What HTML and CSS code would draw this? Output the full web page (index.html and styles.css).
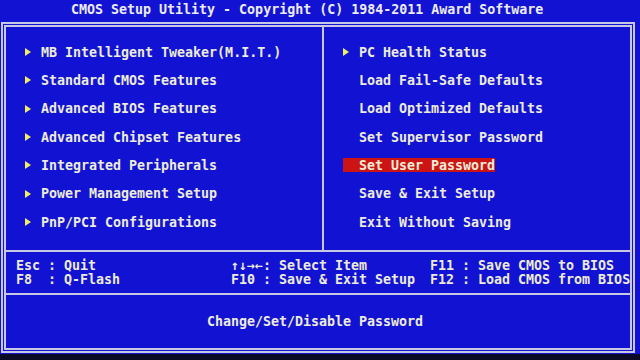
FILE: index.html
```html
<!DOCTYPE html>
<html>
<head>
<meta charset="utf-8">
<link rel="stylesheet" href="styles.css">
</head>
<body>
<div class="screen">
  <div class="title">CMOS Setup Utility - Copyright (C) 1984-2011 Award Software</div>
  <div class="frame">
    <div class="menus">
      <div class="col col-left">
        <div class="row"><span class="item"><span class="marker"><span class="tri"></span></span><span class="label">MB Intelligent Tweaker(M.I.T.)</span></span></div>
        <div class="row"><span class="item"><span class="marker"><span class="tri"></span></span><span class="label">Standard CMOS Features</span></span></div>
        <div class="row"><span class="item"><span class="marker"><span class="tri"></span></span><span class="label">Advanced BIOS Features</span></span></div>
        <div class="row"><span class="item"><span class="marker"><span class="tri"></span></span><span class="label">Advanced Chipset Features</span></span></div>
        <div class="row"><span class="item"><span class="marker"><span class="tri"></span></span><span class="label">Integrated Peripherals</span></span></div>
        <div class="row"><span class="item"><span class="marker"><span class="tri"></span></span><span class="label">Power Management Setup</span></span></div>
        <div class="row"><span class="item"><span class="marker"><span class="tri"></span></span><span class="label">PnP/PCI Configurations</span></span></div>
      </div>
      <div class="col col-right">
        <div class="row"><span class="item"><span class="marker"><span class="tri"></span></span><span class="label">PC Health Status</span></span></div>
        <div class="row"><span class="item"><span class="marker"></span><span class="label">Load Fail-Safe Defaults</span></span></div>
        <div class="row"><span class="item"><span class="marker"></span><span class="label">Load Optimized Defaults</span></span></div>
        <div class="row"><span class="item"><span class="marker"></span><span class="label">Set Supervisor Password</span></span></div>
        <div class="row"><span class="item selected"><span class="marker"></span><span class="label">Set User Password</span></span></div>
        <div class="row"><span class="item"><span class="marker"></span><span class="label">Save &amp; Exit Setup</span></span></div>
        <div class="row"><span class="item"><span class="marker"></span><span class="label">Exit Without Saving</span></span></div>
      </div>
    </div>
    <div class="keys">
      <span>Esc : Quit</span>
      <span>↑↓→←: Select Item</span>
      <span>F11 : Save CMOS to BIOS</span>
      <span>F8  : Q-Flash</span>
      <span>F10 : Save &amp; Exit Setup</span>
      <span>F12 : Load CMOS from BIOS</span>
    </div>
    <div class="help">Change/Set/Disable Password</div>
  </div>
  <div class="strip"></div>
</div>
</body>
</html>
```
FILE: styles.css
```css
html, body {
  margin: 0;
  padding: 0;
  background: #1212d2;
}
.screen {
  width: 640px;
  height: 360px;
  overflow: hidden;
  display: flex;
  flex-direction: column;
  font-family: "DejaVu Sans Mono", "Liberation Mono", monospace;
  font-weight: bold;
  font-size: 13.3px;
  color: #ececd8;
}
.title {
  height: 22px;
  line-height: 20px;
  padding-left: 71px;
  white-space: pre;
  color: #ececf0;
}
.frame {
  height: 331px;
  box-sizing: border-box;
  margin: 0 5px 0 1px;
  border: 5px double #c8c8e4;
  display: flex;
  flex-direction: column;
}
.menus {
  height: 225px;
  box-sizing: border-box;
  border-bottom: 2px solid #c8c8e4;
  display: flex;
}
.col {
  box-sizing: border-box;
  padding-top: 11px;
}
.col-left {
  width: 318px;
  padding-left: 19px;
  border-right: 2px solid #c8c8e4;
}
.col-right {
  flex: 1;
  padding-left: 19px;
}
.row {
  height: 28.33px;
  display: flex;
  align-items: center;
}
.item {
  display: inline-flex;
  align-items: center;
  height: 14px;
  white-space: pre;
}
.marker {
  width: 16px;
  display: flex;
  align-items: center;
}
.tri {
  width: 0;
  height: 0;
  border-left: 6px solid #f2f060;
  border-top: 4px solid transparent;
  border-bottom: 4px solid transparent;
}
.selected {
  background: #cc1414;
}
.keys {
  height: 43px;
  box-sizing: border-box;
  border-bottom: 2px solid #c8c8e4;
  padding: 7px 0 0 10px;
  display: grid;
  grid-template-columns: 215px 199px auto;
  grid-auto-rows: 14px;
  line-height: 14px;
  white-space: pre;
}
.help {
  flex: 1;
  display: flex;
  align-items: center;
  justify-content: center;
  padding-right: 6px;
  white-space: pre;
}
.strip {
  flex: 1;
  margin-top: 1px;
  background: #0a0a26;
}
```
